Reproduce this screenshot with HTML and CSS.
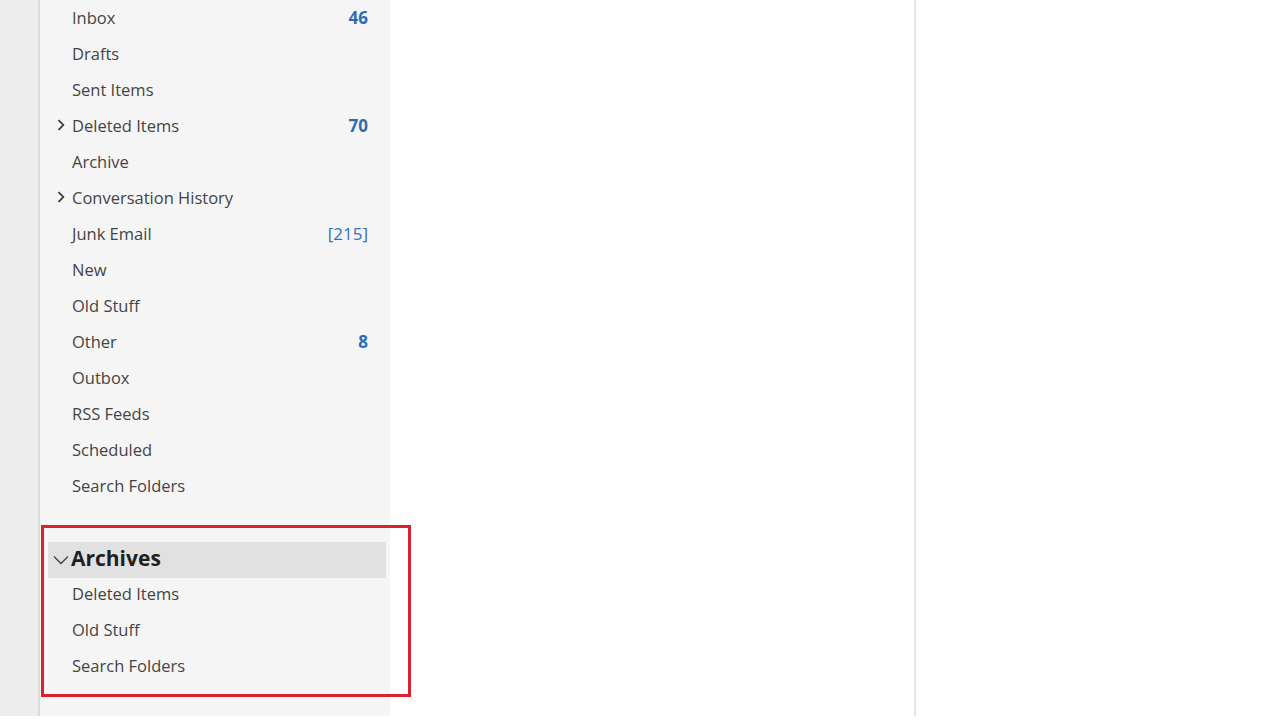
FILE: index.html
```html
<!DOCTYPE html>
<html>
<head>
<meta charset="utf-8">
<link rel="stylesheet" href="styles.css">
</head>
<body>
<div class="app">
  <div class="rail"></div>
  <div class="pane">
    <ul class="folders main">
      <li class="row"><span class="name">Inbox</span><span class="count">46</span></li>
      <li class="row"><span class="name">Drafts</span></li>
      <li class="row"><span class="name">Sent Items</span></li>
      <li class="row"><svg class="chev" width="8" height="12" viewBox="0 0 8 12"><path d="M1.5 1.2 L6.3 6 L1.5 10.8" fill="none" stroke="#333" stroke-width="1.7"/></svg><span class="name">Deleted Items</span><span class="count">70</span></li>
      <li class="row"><span class="name">Archive</span></li>
      <li class="row"><svg class="chev" width="8" height="12" viewBox="0 0 8 12"><path d="M1.5 1.2 L6.3 6 L1.5 10.8" fill="none" stroke="#333" stroke-width="1.7"/></svg><span class="name">Conversation History</span></li>
      <li class="row"><span class="name">Junk Email</span><span class="count light">[215]</span></li>
      <li class="row"><span class="name">New</span></li>
      <li class="row"><span class="name">Old Stuff</span></li>
      <li class="row"><span class="name">Other</span><span class="count">8</span></li>
      <li class="row"><span class="name">Outbox</span></li>
      <li class="row"><span class="name">RSS Feeds</span></li>
      <li class="row"><span class="name">Scheduled</span></li>
      <li class="row"><span class="name">Search Folders</span></li>
    </ul>
    <div class="group">
      <div class="group-head"><svg class="down" width="16" height="10" viewBox="0 0 16 10"><path d="M1 1.5 L8 8.5 L15 1.5" fill="none" stroke="#444" stroke-width="1.4"/></svg><span>Archives</span></div>
      <ul class="folders sub">
        <li class="row"><span class="name">Deleted Items</span></li>
        <li class="row"><span class="name">Old Stuff</span></li>
        <li class="row"><span class="name">Search Folders</span></li>
      </ul>
    </div>
    <div class="highlight"></div>
  </div>
  <div class="list"></div>
  <div class="reading"></div>
</div>
</body>
</html>
```

FILE: styles.css
```css
html, body {
  margin: 0;
  padding: 0;
  background: #ffffff;
}
body {
  font-family: "Open Sans", "Noto Sans", sans-serif;
  width: 1280px;
  height: 720px;
  overflow: hidden;
}
.app {
  display: flex;
  height: 716px;
}
.rail {
  width: 38px;
  background: #ededed;
  border-right: 2px solid #dadada;
}
.pane {
  position: relative;
  width: 350px;
  background: #f5f5f5;
}
.folders {
  list-style: none;
  margin: 0;
  padding: 0;
}
.folders.main {
  margin-top: -1px;
}
.folders.sub {
  margin-top: -3px;
}
.row {
  position: relative;
  display: flex;
  align-items: center;
  height: 36px;
  padding: 0 22px 0 32px;
  font-size: 16.5px;
  color: #444444;
}
.name {
  flex: 1;
}
.chev {
  position: absolute;
  left: 17px;
  top: 12px;
}
.count {
  color: #2e6db4;
  font-weight: 700;
  font-size: 17px;
}
.count.light {
  font-weight: 400;
  color: #3a70b0;
}
.group {
  margin-top: 39px;
}
.group-head {
  display: flex;
  align-items: center;
  height: 36px;
  box-sizing: border-box;
  padding-bottom: 4px;
  margin: 0 4px 0 8px;
  background: #e1e1e1;
  font-size: 21px;
  font-weight: 700;
  color: #1f1f1f;
}
.down {
  margin: 3px 2px 0 5px;
}
.highlight {
  position: absolute;
  left: 1px;
  top: 525px;
  width: 364px;
  height: 166px;
  border: 3px solid #d8232f;
}
.list {
  width: 524px;
  border-right: 2px solid #e3e3e3;
  background: #ffffff;
}
.reading {
  flex: 1;
  background: #ffffff;
}
```
